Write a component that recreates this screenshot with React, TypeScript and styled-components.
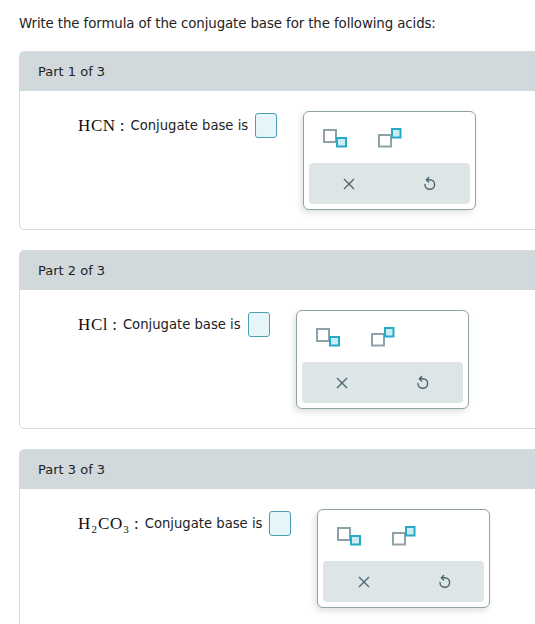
import React from "react";
import styled, { createGlobalStyle } from "styled-components";

const Global = createGlobalStyle`
  html, body { margin: 0; padding: 0; background: #fff; overflow: hidden; }
  body { font-family: "DejaVu Sans", Verdana, sans-serif; color: #222; }
`;

const Page = styled.div`
  padding: 16px 0 0 19px;
  width: 560px;
`;

const Title = styled.div`
  font-size: 13.35px;
  line-height: 16px;
  color: #222;
  margin-bottom: 19px;
  letter-spacing: -0.1px;
`;

const Card = styled.section`
  border: 1px solid #d3dcde;
  border-radius: 5px;
  margin-bottom: 20px;
  overflow: hidden;
`;

const Header = styled.div`
  background: #d1d9dc;
  height: 39px;
  display: flex;
  align-items: center;
  padding-left: 18px;
  font-size: 13px;
  color: #222;
`;

const Body = styled.div<{ $pad: number }>`
  padding: 20px 0 19px ${(p) => p.$pad}px;
`;

const Row = styled.div`
  display: flex;
  align-items: flex-start;
`;

const Label = styled.div`
  display: flex;
  align-items: center;
  height: 29px;
  white-space: nowrap;
`;

const Formula = styled.span`
  font-family: "Liberation Serif", "Times New Roman", serif;
  font-size: 17px;
  letter-spacing: 0.6px;
  color: #111;
  sub {
    font-size: 11px;
    vertical-align: -4px;
    line-height: 0;
    margin: 0 0.5px;
  }
`;

const Colon = styled.span`
  font-family: "Liberation Serif", serif;
  font-size: 17px;
  margin: 0 6px 0 4px;
  color: #111;
`;

const Text = styled.span`
  font-size: 13.2px;
  color: #222;
`;

const AnswerBox = styled.div`
  width: 20px;
  height: 23px;
  margin: 2px 0 0 7px;
  border: 1.5px solid #4b9fb2;
  border-radius: 3px;
  background: #e6f5f9;
`;

const Palette = styled.div`
  margin-left: 26px;
  width: 173px;
  height: 99px;
  border: 1px solid #8ea2a8;
  border-radius: 6px;
  background: #fff;
  box-shadow: -2px 3px 6px rgba(0, 0, 0, 0.12);
  display: flex;
  flex-direction: column;
  padding: 0 5px 5px 5px;
  box-sizing: border-box;
`;

const IconRow = styled.div`
  display: flex;
  align-items: center;
  height: 51px;
  gap: 29px;
  padding-left: 13px;
`;

const ActionBar = styled.div`
  flex: 1;
  background: #dde5e7;
  border-radius: 4px;
  display: flex;
  align-items: center;
  color: #4a6670;
`;

const IconBtn = styled.span`
  display: flex;
  flex: 1;
  justify-content: center;
`;

const SubIcon = () => (
  <svg width="26" height="20" viewBox="0 0 26 20">
    <rect x="2" y="2" width="12" height="12" fill="#fff" stroke="#8fa2a9" strokeWidth="2" />
    <rect x="15" y="10" width="9" height="8.5" fill="#c9edf3" stroke="#27aac5" strokeWidth="2" />
  </svg>
);

const SupIcon = () => (
  <svg width="26" height="20" viewBox="0 0 26 20">
    <rect x="2" y="7" width="12" height="11.5" fill="#fff" stroke="#8fa2a9" strokeWidth="2" />
    <rect x="15" y="1" width="8.5" height="8.5" fill="#c9edf3" stroke="#27aac5" strokeWidth="2" />
  </svg>
);

const CloseIcon = () => (
  <svg width="12" height="12" viewBox="0 0 12 12">
    <path d="M1 1 L11 11 M11 1 L1 11" stroke="#4a6670" strokeWidth="1.4" fill="none" />
  </svg>
);

const UndoIcon = () => (
  <svg width="13" height="15" viewBox="0 0 13 15">
    <path
      d="M2 8.5 A4.8 4.8 0 1 0 6.8 3.7 L3.6 3.7"
      stroke="#4a6670"
      strokeWidth="1.4"
      fill="none"
      strokeLinecap="round"
    />
    <path
      d="M5.6 1.4 L3.4 3.7 L5.6 6"
      stroke="#4a6670"
      strokeWidth="1.4"
      fill="none"
      strokeLinejoin="round"
      strokeLinecap="round"
    />
  </svg>
);

type Part = { n: number; formula: React.ReactNode };

const parts: Part[] = [
  { n: 1, formula: <>HCN</> },
  { n: 2, formula: <>HCl</> },
  {
    n: 3,
    formula: (
      <>
        H<sub>2</sub>CO<sub>3</sub>
      </>
    ),
  },
];

export default function App() {
  return (
    <>
      <Global />
      <Page>
        <Title>Write the formula of the conjugate base for the following acids:</Title>
        {parts.map((p) => (
          <Card key={p.n}>
            <Header>Part {p.n} of 3</Header>
            <Body $pad={58}>
              <Row>
                <Label>
                  <Formula>{p.formula}</Formula>
                  <Colon>:</Colon>
                  <Text>Conjugate base is</Text>
                </Label>
                <AnswerBox />
                <Palette>
                  <IconRow>
                    <SubIcon />
                    <SupIcon />
                  </IconRow>
                  <ActionBar>
                    <IconBtn>
                      <CloseIcon />
                    </IconBtn>
                    <IconBtn>
                      <UndoIcon />
                    </IconBtn>
                  </ActionBar>
                </Palette>
              </Row>
            </Body>
          </Card>
        ))}
      </Page>
    </>
  );
}
